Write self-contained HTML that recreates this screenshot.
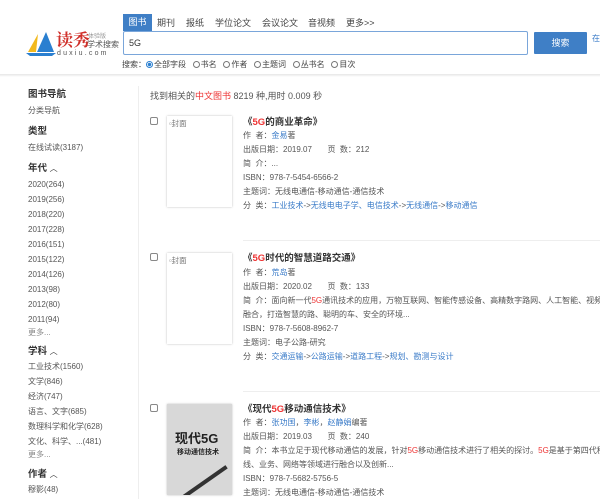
<!DOCTYPE html><html><head><meta charset="utf-8"><style>
*{margin:0;padding:0;box-sizing:border-box}
html,body{width:600px;height:499px;overflow:hidden}
body{background:#fff;font-family:"Liberation Sans","Noto Sans CJK SC",sans-serif;color:#333;position:relative}
#w{position:absolute;left:0;top:0;width:600px;height:499px;overflow:hidden}
.a{position:absolute;white-space:nowrap}
.s{font-size:8px;line-height:10px;color:#555}
.h{font-size:9.5px;font-weight:bold;line-height:12px;color:#333}
.l{color:#3a7bc8}.r{color:#e33}
.cb{position:absolute;width:8px;height:8px;border:1px solid #888;border-radius:2px;background:#fff}
.cv{position:absolute;width:65px;height:91px;background:#fff;box-shadow:0 0 2px #bbb;font-size:7.5px;color:#777;padding:2px}
.sep{position:absolute;left:243px;right:0;height:1px;background:#eee}
.rad{display:inline-block;width:7px;height:7px;border:1px solid #777;border-radius:50%;vertical-align:-1px;margin-right:1px}
</style></head><body><div id="w">
<svg class="a" style="left:24px;top:30px" width="36" height="26" viewBox="0 0 36 26"><polygon points="4,22 14,4 12,22" fill="#f2b91e"/><polygon points="13,22 22,2 30,22" fill="#2a7fd0"/><polygon points="2,23 32,23 28,26 6,26" fill="#2a7fd0"/></svg>
<div class="a" style="left:56px;top:29px;font-size:17px;font-weight:bold;color:#d0302a;font-family:'Noto Serif CJK SC',serif;line-height:20px">读秀</div>
<div class="a" style="left:88px;top:31px;font-size:6px;color:#999">体验版</div>
<div class="a" style="left:87px;top:39px;font-size:8px;color:#555">学术搜索</div>
<div class="a" style="left:57px;top:50px;font-size:7px;letter-spacing:2.2px;color:#555">duxiu.com</div>
<div class="a" style="left:123px;top:14px;width:29px;height:17px;background:#3f7fc6;color:#fff;font-size:9px;line-height:17px;text-align:center">图书</div>
<div class="a s" style="left:157px;top:18px;font-size:9px;color:#444">期刊</div>
<div class="a s" style="left:186px;top:18px;font-size:9px;color:#444">报纸</div>
<div class="a s" style="left:215px;top:18px;font-size:9px;color:#444">学位论文</div>
<div class="a s" style="left:262px;top:18px;font-size:9px;color:#444">会议论文</div>
<div class="a s" style="left:308px;top:18px;font-size:9px;color:#444">音视频</div>
<div class="a s" style="left:346px;top:18px;font-size:9px;color:#444">更多>></div>
<div class="a" style="left:123px;top:31px;width:405px;height:24px;border:1px solid #7aa6da;border-radius:2px;font-size:9px;line-height:22px;padding-left:5px;color:#333">5G</div>
<div class="a" style="left:534px;top:32px;width:53px;height:22px;background:#3f7fc6;color:#fff;font-size:9px;line-height:22px;text-align:center;border-radius:1px">搜索</div>
<div class="a" style="left:592px;top:33px;font-size:8px;color:#3a7bc8">在</div>
<div class="a s" style="left:122px;top:60px;color:#444">搜索：<span class="rad" style="border-color:#2a7fd0;background:radial-gradient(#2a7fd0 45%,#fff 55%)"></span>全部字段 &nbsp;&nbsp;<span class="rad"></span>书名 &nbsp;&nbsp;<span class="rad"></span>作者 &nbsp;&nbsp;<span class="rad"></span>主题词 &nbsp;&nbsp;<span class="rad"></span>丛书名 &nbsp;&nbsp;<span class="rad"></span>目次</div>
<div class="a" style="left:0;top:74px;width:600px;height:3px;background:linear-gradient(#e6e6e6,#fff)"></div>
<div class="a" style="left:138px;top:86px;width:1px;height:413px;background:#eee"></div>
<div class="a h" style="left:28px;top:89px">图书导航</div>
<div class="a s" style="left:28px;top:106px">分类导航</div>
<div class="a h" style="left:28px;top:126px">类型</div>
<div class="a s" style="left:28px;top:143px">在线试读(3187)</div>
<div class="a h" style="left:28px;top:163px">年代 <span style="font-weight:normal;font-size:8px">︿</span></div>
<div class="a s" style="left:28px;top:180px">2020(264)</div>
<div class="a s" style="left:28px;top:195px">2019(256)</div>
<div class="a s" style="left:28px;top:210px">2018(220)</div>
<div class="a s" style="left:28px;top:225px">2017(228)</div>
<div class="a s" style="left:28px;top:240px">2016(151)</div>
<div class="a s" style="left:28px;top:255px">2015(122)</div>
<div class="a s" style="left:28px;top:270px">2014(126)</div>
<div class="a s" style="left:28px;top:285px">2013(98)</div>
<div class="a s" style="left:28px;top:300px">2012(80)</div>
<div class="a s" style="left:28px;top:315px">2011(94)</div>
<div class="a s" style="left:28px;top:328px;color:#888">更多...</div>
<div class="a h" style="left:28px;top:346px">学科 <span style="font-weight:normal;font-size:8px">︿</span></div>
<div class="a s" style="left:28px;top:362px">工业技术(1560)</div>
<div class="a s" style="left:28px;top:377px">文学(846)</div>
<div class="a s" style="left:28px;top:392px">经济(747)</div>
<div class="a s" style="left:28px;top:407px">语言、文字(685)</div>
<div class="a s" style="left:28px;top:422px">数理科学和化学(628)</div>
<div class="a s" style="left:28px;top:437px">文化、科学、...(481)</div>
<div class="a s" style="left:28px;top:450px;color:#888">更多...</div>
<div class="a h" style="left:28px;top:469px">作者 <span style="font-weight:normal;font-size:8px">︿</span></div>
<div class="a s" style="left:28px;top:485px">穆影(48)</div>
<div class="a" style="left:150px;top:89px;font-size:9px;color:#555">找到相关的<span class="r">中文图书</span> 8219 种,用时 0.009 秒</div>
<div class="cb" style="left:150px;top:117px"></div>
<div class="cv" style="left:167px;top:116px">▫封面</div>
<div class="a h" style="left:243px;top:117px">《<span class="r">5G</span>的商业革命》</div>
<div class="a s" style="left:243px;top:131px">作 &nbsp;者：<span class="l">金易</span>著</div>
<div class="a s" style="left:243px;top:145px">出版日期：2019.07 &nbsp;&nbsp;&nbsp;&nbsp;&nbsp;&nbsp;页 &nbsp;数：212</div>
<div class="a s" style="left:243px;top:159px">简 &nbsp;介：...</div>
<div class="a s" style="left:243px;top:173px">ISBN：978-7-5454-6566-2</div>
<div class="a s" style="left:243px;top:187px">主题词：无线电通信-移动通信-通信技术</div>
<div class="a s" style="left:243px;top:201px">分 &nbsp;类：<span class="l">工业技术</span>-><span class="l">无线电电子学、电信技术</span>-><span class="l">无线通信</span>-><span class="l">移动通信</span></div>
<div class="sep" style="top:240px"></div>
<div class="cb" style="left:150px;top:253px"></div>
<div class="cv" style="left:167px;top:253px">▫封面</div>
<div class="a h" style="left:243px;top:253px">《<span class="r">5G</span>时代的智慧道路交通》</div>
<div class="a s" style="left:243px;top:268px">作 &nbsp;者：<span class="l">荒岛</span>著</div>
<div class="a s" style="left:243px;top:282px">出版日期：2020.02 &nbsp;&nbsp;&nbsp;&nbsp;&nbsp;&nbsp;页 &nbsp;数：133</div>
<div class="a s" style="left:243px;top:296px;width:357px;overflow:hidden">简 &nbsp;介：面向新一代<span class="r">5G</span>通讯技术的应用，万物互联网、智能传感设备、高精数字路网、人工智能、视频识别、云平台、</div>
<div class="a s" style="left:243px;top:310px">融合，打造智慧的路、聪明的车、安全的环境...</div>
<div class="a s" style="left:243px;top:324px">ISBN：978-7-5608-8962-7</div>
<div class="a s" style="left:243px;top:338px">主题词：电子公路-研究</div>
<div class="a s" style="left:243px;top:352px">分 &nbsp;类：<span class="l">交通运输</span>-><span class="l">公路运输</span>-><span class="l">道路工程</span>-><span class="l">规划、勘测与设计</span></div>
<div class="sep" style="top:391px"></div>
<div class="cb" style="left:150px;top:404px"></div>
<div class="cv" style="left:167px;top:404px;background:#d8d8d8;padding:0;overflow:hidden">
<div style="position:absolute;left:8px;top:24px;font-size:13px;font-weight:bold;color:#222">现代5G</div>
<div style="position:absolute;left:10px;top:43px;font-size:7px;font-weight:bold;color:#222">移动通信技术</div>
<div style="position:absolute;left:5px;top:78px;width:60px;height:4px;background:#333;transform:rotate(-35deg)"></div>
</div>
<div class="a h" style="left:243px;top:404px">《现代<span class="r">5G</span>移动通信技术》</div>
<div class="a s" style="left:243px;top:418px">作 &nbsp;者：<span class="l">张功国</span>，<span class="l">李彬</span>，<span class="l">赵静娟</span>编著</div>
<div class="a s" style="left:243px;top:432px">出版日期：2019.03 &nbsp;&nbsp;&nbsp;&nbsp;&nbsp;&nbsp;页 &nbsp;数：240</div>
<div class="a s" style="left:243px;top:446px;width:357px;overflow:hidden">简 &nbsp;介：本书立足于现代移动通信的发展，针对<span class="r">5G</span>移动通信技术进行了相关的探讨。<span class="r">5G</span>是基于第四代移动通信的演进</div>
<div class="a s" style="left:243px;top:460px">线、业务、网络等领域进行融合以及创新...</div>
<div class="a s" style="left:243px;top:474px">ISBN：978-7-5682-5756-5</div>
<div class="a s" style="left:243px;top:488px">主题词：无线电通信-移动通信-通信技术</div>
</div></body></html>
